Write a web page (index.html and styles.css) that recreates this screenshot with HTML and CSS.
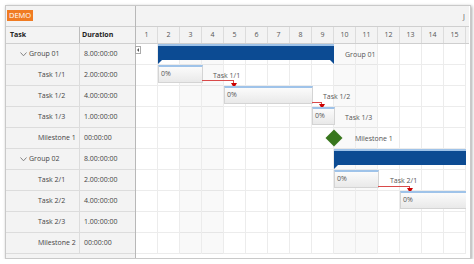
FILE: index.html
```html
<!DOCTYPE html>
<html lang="en">
<head>
    <meta charset="UTF-8">
    <title>Gantt Chart Demo</title>
    <link rel="stylesheet" href="styles.css">
</head>
<body>
    <div class="gantt">
        <div class="left">
            <div class="hdr-top"><span class="demo">DEMO</span></div>
            <div class="row hdr">
                <div class="c-task">Task</div>
                <div class="c-dur">Duration</div>
            </div>
            <div class="row">
                <div class="c-task group"><svg class="chev" width="7" height="5" viewBox="0 0 7 5"><polyline points="0.5,0.5 3.5,3.8 6.5,0.5" fill="none" stroke="#777" stroke-width="0.9"/></svg>Group 01</div>
                <div class="c-dur">8.00:00:00</div>
            </div>
            <div class="row"><div class="c-task item">Task 1/1</div><div class="c-dur">2.00:00:00</div></div>
            <div class="row"><div class="c-task item">Task 1/2</div><div class="c-dur">4.00:00:00</div></div>
            <div class="row"><div class="c-task item">Task 1/3</div><div class="c-dur">1.00:00:00</div></div>
            <div class="row"><div class="c-task item">Milestone 1</div><div class="c-dur">00:00:00</div></div>
            <div class="row">
                <div class="c-task group"><svg class="chev" width="7" height="5" viewBox="0 0 7 5"><polyline points="0.5,0.5 3.5,3.8 6.5,0.5" fill="none" stroke="#777" stroke-width="0.9"/></svg>Group 02</div>
                <div class="c-dur">8.00:00:00</div>
            </div>
            <div class="row"><div class="c-task item">Task 2/1</div><div class="c-dur">2.00:00:00</div></div>
            <div class="row"><div class="c-task item">Task 2/2</div><div class="c-dur">4.00:00:00</div></div>
            <div class="row"><div class="c-task item">Task 2/3</div><div class="c-dur">1.00:00:00</div></div>
            <div class="row"><div class="c-task item">Milestone 2</div><div class="c-dur">00:00:00</div></div>
        </div>

        <div class="splitter"><span class="collapse"></span></div>

        <div class="right">
            <div class="month"><span>J</span></div>
            <div class="days">
                <div class="day">1</div><div class="day">2</div><div class="day">3</div>
                <div class="day">4</div><div class="day">5</div><div class="day">6</div>
                <div class="day">7</div><div class="day">8</div><div class="day">9</div>
                <div class="day">10</div><div class="day">11</div><div class="day">12</div>
                <div class="day">13</div><div class="day">14</div><div class="day">15</div>
            </div>
            <div class="canvas">
                <div class="cols">
                    <div class="col"></div><div class="col"></div><div class="col we"></div>
                    <div class="col we"></div><div class="col"></div><div class="col"></div>
                    <div class="col"></div><div class="col"></div><div class="col"></div>
                    <div class="col we"></div><div class="col we"></div><div class="col"></div>
                    <div class="col"></div><div class="col"></div><div class="col"></div>
                </div>

                <!-- group 01 -->
                <div class="group-bar" style="left: 22px; top: 0px; width: 176px;"></div>
                <div class="label" style="left: 209px; top: 0px;">Group 01</div>

                <div class="task-bar" style="left: 22px; top: 21px; width: 41px;">0%</div>
                <div class="label" style="left: 77px; top: 21px;">Task 1/1</div>
                <div class="link" style="left: 66px; top: 36px; width: 31px; height: 5px;"></div>

                <div class="task-bar" style="left: 88px; top: 42px; width: 85px;">0%</div>
                <div class="label" style="left: 187px; top: 42px;">Task 1/2</div>
                <div class="link" style="left: 176px; top: 58px; width: 9px; height: 4px;"></div>

                <div class="task-bar" style="left: 176px; top: 63px; width: 19px;">0%</div>
                <div class="label" style="left: 209px; top: 63px;">Task 1/3</div>

                <div class="milestone" style="left: 192px; top: 88px;"></div>
                <div class="label" style="left: 219px; top: 84px;">Milestone 1</div>

                <!-- group 02 -->
                <div class="group-bar open" style="left: 198px; top: 105px; width: 200px;"></div>

                <div class="task-bar" style="left: 198px; top: 126px; width: 41px;">0%</div>
                <div class="label" style="left: 254px; top: 126px;">Task 2/1</div>
                <div class="link" style="left: 242px; top: 142px; width: 31px; height: 4px;"></div>

                <div class="task-bar" style="left: 264px; top: 147px; width: 85px;">0%</div>
            </div>
        </div>
    </div>
</body>
</html>
```

FILE: styles.css
```css
body {
    margin: 0;
    background: #fff;
    font-family: "Open Sans", "Noto Sans", sans-serif;
    font-size: 7px;
    color: #444;
}
.gantt {
    display: flex;
    margin: 5px 0 0 5px;
    width: 464px;
    height: 252px;
    border: 1px solid #c9c9c9;
    box-shadow: 1px 1px 3px rgba(0,0,0,0.35);
    background: #fff;
}
.left {
    width: 129px;
    display: flex;
    flex-direction: column;
    background: #f3f3f3;
}
.hdr-top {
    height: 20px;
    border-bottom: 1px solid #cfcfcf;
}
.demo {
    display: inline-block;
    margin: 4px 0 0 1px;
    padding: 0 2px;
    height: 11px;
    line-height: 11px;
    background: #f07b22;
    color: #fff;
    font-size: 7.5px;
}
.row {
    display: flex;
    height: 20px;
    line-height: 20px;
    border-bottom: 1px solid #dcdcdc;
}
.row.hdr {
    height: 16px;
    line-height: 16px;
    border-bottom: 1px solid #cfcfcf;
    font-weight: bold;
    color: #222;
}
.c-task {
    width: 73px;
    border-right: 1px solid #dcdcdc;
    padding-left: 4px;
    box-sizing: border-box;
    width: 74px;
}
.hdr .c-task {
    border-right-color: #bdbdbd;
}
.c-dur {
    flex: 1;
    padding-left: 4px;
}
.hdr .c-dur {
    padding-left: 2px;
}
.c-task.group {
    padding-left: 14px;
    display: flex;
    align-items: center;
}
.chev {
    margin-right: 2px;
}
.c-task.item {
    padding-left: 32px;
}
.splitter {
    position: relative;
    width: 1px;
    background: #b8b8b8;
}
.collapse {
    position: absolute;
    top: 40px;
    left: 0;
    width: 4px;
    height: 6px;
    border: 1px solid #aaa;
    background: #fff;
}
.collapse::after {
    content: "";
    position: absolute;
    left: 1px;
    top: 1px;
    border-right: 2px solid #555;
    border-top: 2px solid transparent;
    border-bottom: 2px solid transparent;
}
.right {
    width: 333px;
    display: flex;
    flex-direction: column;
}
.month {
    height: 20px;
    line-height: 22px;
    border-bottom: 1px solid #cfcfcf;
    background: #f3f3f3;
    text-align: right;
    padding-right: 4px;
    color: #555;
}
.days {
    display: flex;
    height: 16px;
    line-height: 16px;
    border-bottom: 1px solid #cfcfcf;
    background: #f3f3f3;
}
.day {
    width: 21px;
    border-right: 1px solid #dcdcdc;
    text-align: center;
    color: #555;
}
.canvas {
    position: relative;
    width: 330px;
    height: 210px;
    overflow: hidden;
    background: repeating-linear-gradient(to bottom, transparent 0 20px, #ececec 20px 21px);
}
.cols {
    display: flex;
    height: 100%;
}
.col {
    width: 21px;
    border-right: 1px solid #ececec;
}
.col.we {
    background: rgba(0,0,0,0.025);
}
.group-bar {
    position: absolute;
    height: 14px;
    background: #0c4b93;
    border-top: 2px solid #9fc3e9;
}
.group-bar::before,
.group-bar::after {
    content: "";
    position: absolute;
    bottom: -4px;
    border-top: 4px solid #0c4b93;
}
.group-bar::before {
    left: 0;
    border-right: 4px solid transparent;
}
.group-bar::after {
    right: 0;
    border-left: 4px solid transparent;
}
.task-bar {
    position: absolute;
    height: 15px;
    line-height: 14px;
    padding-left: 2px;
    border: 1px solid #d4d4d4;
    border-top: 2px solid #9fc3e9;
    background: linear-gradient(#fbfbfb, #e9e9e9);
    color: #555;
}
.label {
    position: absolute;
    line-height: 22px;
    color: #555;
    white-space: nowrap;
}
.link {
    position: absolute;
    border-top: 1px solid #d94a4a;
    border-right: 1px solid #d94a4a;
}
.link::after {
    content: "";
    position: absolute;
    right: -4px;
    bottom: -2px;
    border-top: 5px solid #c00;
    border-left: 3.5px solid transparent;
    border-right: 3.5px solid transparent;
}
.milestone {
    position: absolute;
    width: 12px;
    height: 12px;
    background: #38761d;
    transform: rotate(45deg);
}
```
